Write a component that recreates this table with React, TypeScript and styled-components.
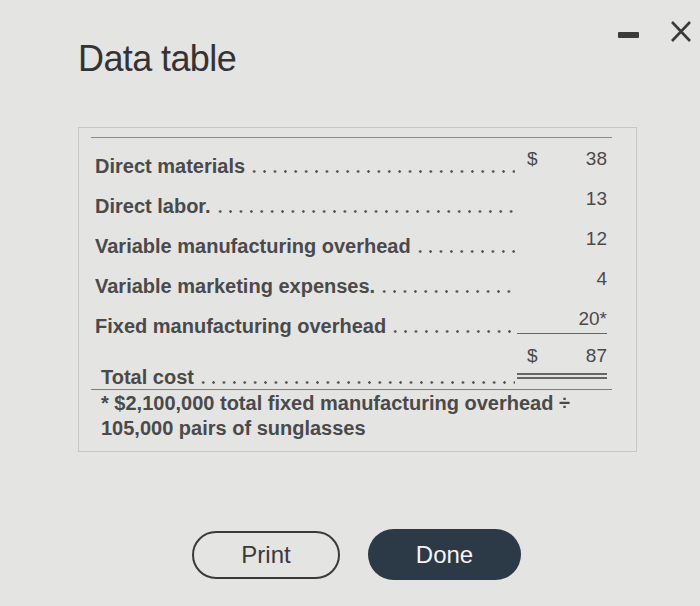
import React from "react";
import styled, {createGlobalStyle} from "styled-components";

const GlobalStyle = createGlobalStyle`
	html, body {
		margin: 0;
		padding: 0;
		background: #e4e4e2;
	}
	body {
		font-family: "Liberation Sans", Arial, sans-serif;
		color: #333;
	}
`;

const Page = styled.div`
	width: 700px;
	height: 606px;
	overflow: hidden;
	display: flex;
	flex-direction: column;
	background: #e4e4e2;
`;

const Header = styled.header`
	display: flex;
	justify-content: space-between;
	align-items: flex-start;
	padding: 20px 8px 0 78px;
`;

const Title = styled.h1`
	margin: 21px 0 0;
	font-size: 36px;
	line-height: 1;
	font-weight: normal;
	letter-spacing: -0.6px;
	color: #333;
`;

const Controls = styled.div`
	display: flex;
	align-items: flex-start;
	gap: 30px;
	.minus {
		margin-top: 11px;
	}
`;

const Box = styled.div`
	margin: 50px 0 0 78px;
	width: 559px;
	box-sizing: border-box;
	border: 1.5px solid #c7c7c5;
	padding: 9px 24px 10px 12px;
`;

const Table = styled.div`
	border-top: 1.5px solid #8a8a8a;
	padding-top: 8px;
`;

const Row = styled.div<{$total?: boolean}>`
	display: grid;
	grid-template-columns: 1fr 90px;
	height: ${p => (p.$total ? "43px" : "40px")};
	padding: 0 5px 0 ${p => (p.$total ? "10px" : "4px")};
	border-bottom: ${p => (p.$total ? "1.5px solid #7d7d7d" : "none")};
`;

const Label = styled.div<{$bottom?: boolean}>`
	display: flex;
	align-items: center;
	align-self: ${p => (p.$bottom ? "end" : "center")};
	min-width: 0;
	font-size: 20px;
	font-weight: bold;
	line-height: 24px;
	color: #4a4a4a;
	white-space: nowrap;
`;

const Leader = styled.span`
	flex: 1;
	align-self: flex-end;
	height: 3px;
	margin: 0 2px 5px 4px;
	background: radial-gradient(circle, #555 1.1px, transparent 1.5px) 0 0 / 10.4px 3px repeat-x;
`;

const Value = styled.div<{$rule?: "single" | "double"}>`
	align-self: start;
	display: flex;
	justify-content: space-between;
	margin-top: ${p => (p.$rule === "double" ? "-1px" : "2px")};
	padding: 0 0 ${p => (p.$rule === "double" ? "6px" : "3px")} 10px;
	font-size: 19px;
	line-height: 22px;
	color: #4a4a4a;
	border-bottom: ${p =>
		p.$rule === "double" ? "6px double #666" : p.$rule === "single" ? "1.5px solid #666" : "none"};
	.num {
		margin-left: auto;
	}
`;

const Footnote = styled.p`
	margin: 1px 0 0 10px;
	font-size: 20px;
	font-weight: bold;
	line-height: 25px;
	color: #4a4a4a;
`;

const Buttons = styled.div`
	display: flex;
	justify-content: center;
	gap: 28px;
	margin-top: 77px;
	padding-left: 13px;
`;

const Button = styled.button<{$primary?: boolean}>`
	width: ${p => (p.$primary ? "153px" : "148px")};
	height: ${p => (p.$primary ? "51px" : "48px")};
	align-self: center;
	box-sizing: border-box;
	border-radius: 26px;
	font-family: "Liberation Sans", Arial, sans-serif;
	font-size: 24px;
	cursor: pointer;
	border: ${p => (p.$primary ? "none" : "2.5px solid #3a3a3a")};
	background: ${p => (p.$primary ? "#2c3947" : "transparent")};
	color: ${p => (p.$primary ? "#f4f4f4" : "#3a3a3a")};
`;

type Item = {label: string; dollar?: boolean; amount: string; rule?: "single"};

const items: Item[] = [
	{label: "Direct materials", dollar: true, amount: "38"},
	{label: "Direct labor.", amount: "13"},
	{label: "Variable manufacturing overhead", amount: "12"},
	{label: "Variable marketing expenses.", amount: "4"},
	{label: "Fixed manufacturing overhead", amount: "20*", rule: "single"},
];

const App: React.FC = () => {
	return (
		<Page>
			<GlobalStyle/>
			<Header>
				<Title>Data table</Title>
				<Controls>
					<svg className="minus" width="22" height="8" viewBox="0 0 22 8">
						<rect x="0" y="1" width="21" height="6" rx="1" fill="#3b3b3b"/>
					</svg>
					<svg width="22" height="23" viewBox="0 0 22 23">
						<path d="M2 2 L20 21 M20 2 L2 21" stroke="#3b3b3b" strokeWidth="2.6" fill="none"/>
					</svg>
				</Controls>
			</Header>

			<Box>
				<Table>
					{items.map(item => (
						<Row key={item.label}>
							<Label>
								<span>{item.label}</span>
								<Leader/>
							</Label>
							<Value $rule={item.rule}>
								{item.dollar && <span>$</span>}
								<span className="num">{item.amount}</span>
							</Value>
						</Row>
					))}
					<Row $total>
						<Label $bottom>
							<span>Total cost</span>
							<Leader/>
						</Label>
						<Value $rule="double">
							<span>$</span>
							<span className="num">87</span>
						</Value>
					</Row>
				</Table>
				<Footnote>
					* $2,100,000 total fixed manufacturing overhead ÷<br/>
					105,000 pairs of sunglasses
				</Footnote>
			</Box>

			<Buttons>
				<Button>Print</Button>
				<Button $primary>Done</Button>
			</Buttons>
		</Page>
	);
};

export default App;
